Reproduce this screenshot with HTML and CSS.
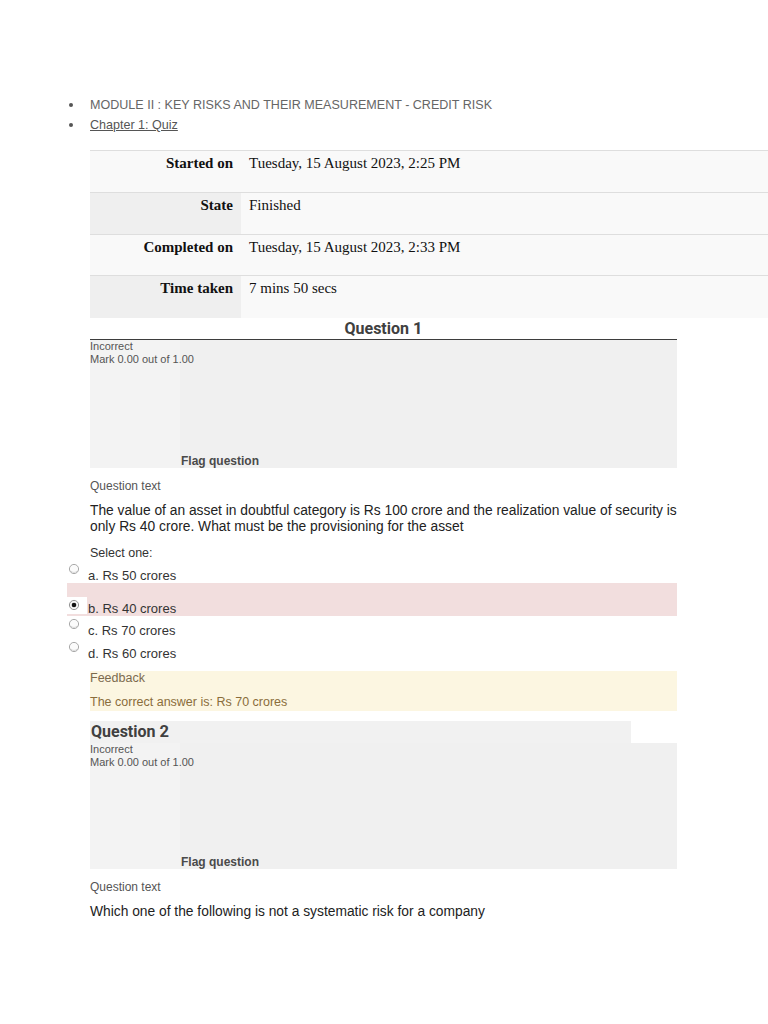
FILE: index.html
```html
<!DOCTYPE html>
<html>
<head>
<meta charset="utf-8">
<link rel="stylesheet" href="styles.css">
</head>
<body>
<ul class="crumbs">
  <li>MODULE II : KEY RISKS AND THEIR MEASUREMENT - CREDIT RISK</li>
  <li><a class="crumb-link">Chapter 1: Quiz</a></li>
</ul>

<table class="summary">
  <tr class="row-a"><th>Started on</th><td>Tuesday, 15 August 2023, 2:25 PM</td></tr>
  <tr class="row-b"><th>State</th><td>Finished</td></tr>
  <tr class="row-a"><th>Completed on</th><td>Tuesday, 15 August 2023, 2:33 PM</td></tr>
  <tr class="row-b"><th>Time taken</th><td>7 mins 50 secs</td></tr>
</table>

<section class="question">
  <h3 class="q-title centered">Question <span class="num">1</span></h3>
  <div class="info">
    <div class="state">Incorrect</div>
    <div class="grade">Mark 0.00 out of 1.00</div>
    <div class="flag">Flag question</div>
  </div>
  <div class="qlabel">Question text</div>
  <p class="qtext">The value of an asset in doubtful category is Rs 100 crore and the realization value of security is only Rs 40 crore. What must be the provisioning for the asset</p>
  <div class="select">Select one:</div>
  <div class="answers">
    <div class="opt opt-a">
      <span class="radio"><svg width="12" height="12" viewBox="0 0 12 12"><circle cx="6" cy="6" r="4.6" fill="#fbfbfb" stroke="#a0a0a0" stroke-width="0.9"/><path d="M2.6 7.6 A4 4 0 0 0 9.4 7.6" fill="none" stroke="#dadada" stroke-width="1"/></svg></span>
      <span class="otext">a. Rs 50 crores</span>
    </div>
    <div class="opt opt-b">
      <span class="radio radio-box"><svg width="12" height="12" viewBox="0 0 12 12"><circle cx="6" cy="6" r="4.6" fill="#f4f4f4" stroke="#8a8a8a" stroke-width="0.9"/><circle cx="6" cy="6" r="2.3" fill="#111"/></svg></span>
      <span class="otext">b. Rs 40 crores</span>
    </div>
    <div class="opt opt-c">
      <span class="radio"><svg width="12" height="12" viewBox="0 0 12 12"><circle cx="6" cy="6" r="4.6" fill="#fbfbfb" stroke="#a0a0a0" stroke-width="0.9"/><path d="M2.6 7.6 A4 4 0 0 0 9.4 7.6" fill="none" stroke="#dadada" stroke-width="1"/></svg></span>
      <span class="otext">c. Rs 70 crores</span>
    </div>
    <div class="opt opt-d">
      <span class="radio"><svg width="12" height="12" viewBox="0 0 12 12"><circle cx="6" cy="6" r="4.6" fill="#fbfbfb" stroke="#a0a0a0" stroke-width="0.9"/><path d="M2.6 7.6 A4 4 0 0 0 9.4 7.6" fill="none" stroke="#dadada" stroke-width="1"/></svg></span>
      <span class="otext">d. Rs 60 crores</span>
    </div>
  </div>
  <div class="feedback">
    <div class="fb-label">Feedback</div>
    <div class="fb-text">The correct answer is: Rs 70 crores</div>
  </div>
</section>

<section class="question q2">
  <h3 class="q-title boxed">Question <span class="num">2</span></h3>
  <div class="info">
    <div class="state">Incorrect</div>
    <div class="grade">Mark 0.00 out of 1.00</div>
    <div class="flag">Flag question</div>
  </div>
  <div class="qlabel">Question text</div>
  <p class="qtext">Which one of the following is not a systematic risk for a company</p>
</section>
</body>
</html>
```

FILE: styles.css
```css
html, body {
  margin: 0;
  padding: 0;
  background: #fff;
}

body {
  font-family: "Liberation Sans", Arial, sans-serif;
  color: #333;
  overflow: hidden;
}

.crumbs {
  margin: 95px 0 0 90px;
  padding: 0;
  list-style: none;
  font-size: 12.55px;
  line-height: 20px;
  color: #666;
}

.crumbs li::before {
  content: "";
  display: inline-block;
  width: 4px;
  height: 4px;
  border-radius: 50%;
  background: #555;
  margin-left: -21px;
  margin-right: 17px;
  vertical-align: middle;
  position: relative;
  top: -1px;
}

.crumb-link {
  color: #555;
  text-decoration: underline;
}

.summary {
  margin: 15px 0 0 90px;
  width: 678px;
  border-collapse: collapse;
  font-family: "Liberation Serif", "Times New Roman", serif;
  font-size: 15px;
  color: #111;
}

.summary tr {
  height: 41.75px;
  border-top: 1px solid #dedede;
}

.summary th,
.summary td {
  vertical-align: top;
  padding: 3px 8px 0 8px;
  line-height: 18px;
  background: #f9f9f9;
}

.summary th {
  width: 135px;
  text-align: right;
  font-weight: bold;
}

.summary .row-b th {
  background: #efefef;
}

.question {
  width: 587px;
  margin-left: 90px;
}

.q-title {
  margin: 0;
  font-family: Roboto, "Liberation Sans", sans-serif;
  font-weight: bold;
  font-size: 16px;
  color: #404040;
}

.q-title .num {
  font-size: 16.5px;
}

.q-title.centered {
  text-align: center;
  line-height: 21px;
  border-bottom: 1.5px solid #3d3d3d;
}

.q-title.boxed {
  width: 540px;
  line-height: 22px;
  background: #f1f1f1;
  padding-left: 1px;
}

.info {
  height: 128px;
  background: linear-gradient(to right, #f3f3f3 90px, #f0f0f0 90px);
  display: flex;
  flex-direction: column;
  font-size: 11px;
  line-height: 13px;
  color: #555;
}

.q2 .info {
  height: 126px;
}

.flag {
  margin-top: auto;
  padding-left: 91px;
  font-size: 12px;
  font-weight: bold;
  color: #4a4a4a;
  line-height: 13px;
}

.qlabel {
  margin-top: 11px;
  font-size: 12px;
  line-height: 15px;
  color: #555;
}

.qtext {
  margin: 9px 0 0 0;
  width: 592px;
  font-size: 13.8px;
  line-height: 16px;
  color: #222;
}

.select {
  margin-top: 11px;
  font-size: 12.5px;
  line-height: 15px;
  color: #333;
}

.answers {
  margin-left: -23px;
  margin-top: 3px;
  width: 610px;
}

.opt {
  display: flex;
  align-items: flex-start;
  font-size: 13px;
  color: #333;
}

.radio {
  display: block;
  width: 21px;
  line-height: 0;
}

.radio svg {
  margin-left: 1px;
}

.otext {
  line-height: 15px;
}

.opt-a {
  height: 19px;
}

.opt-a .radio {
  margin-top: -1px;
}

.opt-a .otext {
  margin-top: 4px;
}

.opt-b {
  height: 33px;
  background: #f2dede;
  padding-top: 14px;
  box-sizing: border-box;
}

.opt-b .radio-box {
  background: #fff;
  width: 20px;
  height: 17px;
  margin-right: 1px;
}

.opt-b .radio-box svg {
  margin-top: 2px;
}

.opt-b .otext {
  margin-top: 4px;
}

.opt-c {
  height: 25px;
  padding-top: 2px;
  box-sizing: border-box;
}

.opt-c .otext {
  margin-top: 5px;
}

.opt-d {
  height: 22px;
}

.opt-d .otext {
  margin-top: 5px;
}

.feedback {
  margin-top: 8px;
  height: 40px;
  background: #fcf6e1;
  font-size: 12.5px;
  line-height: 15px;
  color: #8a6d3b;
  display: flex;
  flex-direction: column;
  justify-content: space-between;
}

.fb-label {
  color: #7b6a4e;
}

.fb-text {
  padding-bottom: 1px;
}

.q2 {
  margin-top: 10px;
}
```
